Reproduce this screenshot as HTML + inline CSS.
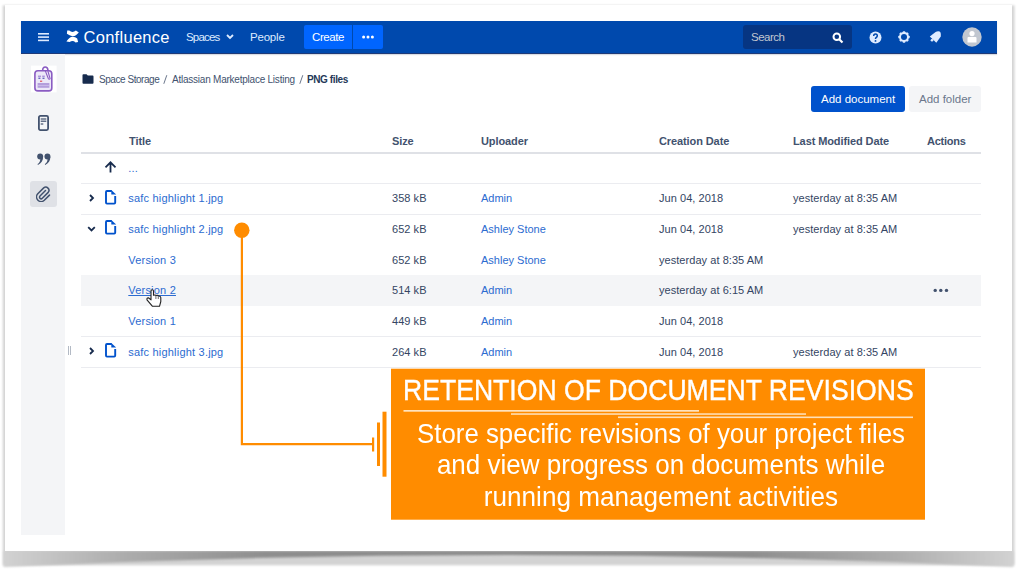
<!DOCTYPE html>
<html><head><meta charset="utf-8">
<style>
*{margin:0;padding:0;box-sizing:border-box}
html,body{width:1024px;height:575px;overflow:hidden;background:#fff;font-family:"Liberation Sans",sans-serif;}
.a{position:absolute;white-space:nowrap}
#card{position:absolute;left:5px;top:5px;width:1007px;height:546px;background:#fff}
#nav{position:absolute;left:21px;top:21px;width:976px;height:33px;background:#0049AD;border-bottom:1px solid #1F3A78;box-shadow:0 1px 1px rgba(9,30,66,0.15)}
#side{position:absolute;left:21px;top:54px;width:44px;height:481px;background:#F4F5F7}
.t{position:absolute;white-space:nowrap;line-height:1;}
.nav{color:#DEEBFF;font-size:11.5px}
.bc{color:#42526E;font-size:10px}
.th{color:#42526E;font-size:11px;font-weight:bold;letter-spacing:-0.1px}
.td{color:#344563;font-size:11px;letter-spacing:0.05px}
.lk{color:#2C6BD0;font-size:11px;letter-spacing:0px}
.hl{position:absolute;left:81px;height:1px;width:900px;background:#EBECF0}
</style></head><body>
<svg class="a" style="left:0;top:0" width="1024" height="575">
<defs>
<linearGradient id="gb" x1="0" x2="1" y1="0" y2="0"><stop offset="0" stop-color="#d2d2d2"/><stop offset="0.12" stop-color="#acacac"/><stop offset="0.26" stop-color="#8e8e8e"/><stop offset="0.5" stop-color="#8a8a8a"/><stop offset="0.74" stop-color="#8e8e8e"/><stop offset="0.88" stop-color="#acacac"/><stop offset="1" stop-color="#d2d2d2"/></linearGradient>
<filter id="bs" x="-2%" y="-2%" width="104%" height="104%"><feGaussianBlur stdDeviation="1.3"/></filter><filter id="bl" x="-5%" y="-50%" width="110%" height="200%"><feGaussianBlur stdDeviation="0.9"/></filter>
</defs>
<rect x="2.8" y="5.3" width="1011.7" height="560" fill="#000" opacity="0.17" filter="url(#bs)"/>
<path d="M3.5 551 L1013.5 551 L1013.5 567 Q761 555 508.5 555 Q256 555 3.5 567 Z" fill="url(#gb)" filter="url(#bl)"/>
</svg>
<div id="card"></div>
<div id="nav"></div>
<div id="side"></div>

<!-- nav contents -->
<svg class="a" style="left:38px;top:33px" width="11" height="9"><rect x="0" y="0" width="11" height="1.6" fill="#DEEBFF"/><rect x="0" y="3.3" width="11" height="1.6" fill="#DEEBFF"/><rect x="0" y="6.6" width="11" height="1.6" fill="#DEEBFF"/></svg>
<svg class="a" style="left:66px;top:30px" width="14" height="14" viewBox="0 0 14 14"><path d="M1.2 0.6 L3.2 0.6 Q6.5 3.4 9.9 0.5 L12.8 2.6 Q9.5 6.6 6.5 6.2 Q3.5 5.8 0.9 3.8Z" fill="#fff"/><path d="M0.4 11.4 Q3.5 7 6.5 6.8 Q9.5 6.8 11.2 8.5 L12.1 12 L9.6 12.4 Q6.5 9.8 3.7 12.1Z" fill="#fff"/></svg>
<div class="t" style="left:83.5px;top:28.8px;font-size:16.5px;color:#fff;letter-spacing:0.28px">Confluence</div>
<div class="t nav" style="left:186px;top:32px;letter-spacing:-0.8px">Spaces</div>
<svg class="a" style="left:226px;top:34px" width="8" height="6"><path d="M1 1 L4 4 L7 1" stroke="#DEEBFF" stroke-width="1.8" fill="none"/></svg>
<div class="t nav" style="left:250px;top:32px;letter-spacing:-0.2px">People</div>
<div class="a" style="left:304px;top:25px;width:48px;height:24px;background:#0065FF;border-radius:2px 0 0 2px"></div>
<div class="a" style="left:353px;top:25px;width:30px;height:24px;background:#0065FF;border-radius:0 2px 2px 0"></div>
<div class="t nav" style="left:312px;top:32px;color:#fff;letter-spacing:-0.4px">Create</div>
<svg class="a" style="left:362px;top:35px" width="12" height="4"><circle cx="1.6" cy="2" r="1.5" fill="#fff"/><circle cx="6" cy="2" r="1.5" fill="#fff"/><circle cx="10.4" cy="2" r="1.5" fill="#fff"/></svg>

<div class="a" style="left:743px;top:25px;width:109px;height:24px;background:#063582;border-radius:3px"></div>
<div class="t nav" style="left:751px;top:32px;color:#C1C7D0;letter-spacing:-0.5px">Search</div>
<svg class="a" style="left:832px;top:32px" width="12" height="12"><circle cx="4.8" cy="4.8" r="3.3" stroke="#fff" stroke-width="2" fill="none"/><path d="M7.2 7.2 L10.5 10.5" stroke="#fff" stroke-width="2.2"/></svg>
<svg class="a" style="left:868.5px;top:31px" width="13" height="13" viewBox="0 0 13 13"><circle cx="6.5" cy="6.5" r="6" fill="#DEEBFF"/><path d="M4.7 4.9 Q4.7 3 6.5 3 Q8.3 3 8.3 4.8 Q8.3 5.9 7.1 6.6 Q6.5 7 6.5 8" stroke="#0049AD" stroke-width="1.5" fill="none"/><circle cx="6.5" cy="9.9" r="0.95" fill="#0049AD"/></svg>
<svg class="a" style="left:897px;top:30px" width="14" height="14" viewBox="0 0 14 14"><g fill="#DEEBFF"><circle cx="7" cy="7" r="4.9"/><rect x="5.7" y="1.3" width="2.6" height="11.4" rx="0.6"/><rect x="5.7" y="1.3" width="2.6" height="11.4" rx="0.6" transform="rotate(45 7 7)"/><rect x="5.7" y="1.3" width="2.6" height="11.4" rx="0.6" transform="rotate(90 7 7)"/><rect x="5.7" y="1.3" width="2.6" height="11.4" rx="0.6" transform="rotate(135 7 7)"/></g><circle cx="7" cy="7" r="3" fill="#0049AD"/></svg>
<svg class="a" style="left:926px;top:28px" width="20" height="18" viewBox="0 0 20 18"><path d="M3.8 8.5 L9.6 4 Q11.5 3 13.6 3.5 Q14.8 4 14.8 6 L14.8 8.6 L10.3 14.8 Z" fill="#DEEBFF"/><circle cx="6" cy="12.3" r="1.3" fill="#DEEBFF"/></svg>
<svg class="a" style="left:962px;top:27px" width="20" height="20"><circle cx="10" cy="10" r="9.7" fill="#C1C7D0"/><circle cx="10" cy="6.6" r="2.6" fill="#fff"/><path d="M5.5 11 Q5.5 10 6.5 10 L13.5 10 Q14.5 10 14.5 11 L14.5 15.5 L5.5 15.5Z" fill="#fff"/></svg>

<!-- sidebar -->
<svg class="a" style="left:31px;top:65px" width="26" height="28" viewBox="0 0 26 28">
<rect x="0" y="0.6" width="25.6" height="26.8" fill="#fff"/>
<rect x="3.9" y="5.7" width="16.9" height="20.2" rx="3" fill="#ECE8F8" stroke="#8A5CC2" stroke-width="1.6"/>
<path d="M11.6 5.4 Q11.6 2 14.2 2 Q16.8 2 17 5.4" fill="none" stroke="#8A5CC2" stroke-width="1.5"/>
<path d="M14.3 5.9 L17.3 13.4 Q18.2 15 19.1 13.7 L16.9 6.2" fill="none" stroke="#8A5CC2" stroke-width="1.1"/>
<rect x="7" y="10.6" width="3" height="1.3" fill="#A88CD8"/><rect x="11.2" y="10.6" width="2.6" height="1.3" fill="#A88CD8"/>
<rect x="7.4" y="12.6" width="2" height="1.3" fill="#5C5CB8"/><rect x="11.5" y="12.6" width="2" height="1.3" fill="#5C5CB8"/>
<rect x="9" y="15.6" width="2.2" height="1.3" fill="#E0606A"/>
<rect x="6.6" y="18" width="11.8" height="4.8" fill="#B49EDC"/>
<rect x="6.6" y="20.2" width="11.8" height="0.6" fill="#D6CCF0"/>
</svg>
<svg class="a" style="left:38px;top:115px" width="11" height="16" viewBox="0 0 11 16"><rect x="0.9" y="0.9" width="9.2" height="14.2" rx="1.5" fill="none" stroke="#42526E" stroke-width="1.8"/><rect x="2.7" y="3.4" width="5.6" height="1.2" fill="#42526E"/><rect x="2.7" y="5.6" width="5.6" height="1.2" fill="#42526E"/><rect x="2.7" y="8.4" width="2.6" height="1.2" fill="#42526E"/></svg>
<svg class="a" style="left:36.6px;top:153px" width="14" height="12.4" viewBox="0 0 15 13" preserveAspectRatio="none"><g fill="#42526E"><circle cx="3.4" cy="3.6" r="3.2"/><path d="M6.5 4 C6.6 8 4.5 11 1 12.5 L0.6 11.5 C2.5 10.5 3.5 8.5 3.4 6.7Z"/><circle cx="11.2" cy="3.6" r="3.2"/><path d="M14.3 4 C14.4 8 12.3 11 8.8 12.5 L8.4 11.5 C10.3 10.5 11.3 8.5 11.2 6.7Z"/></g></svg>
<div class="a" style="left:30px;top:181px;width:27px;height:26px;background:#DFE1E6;border-radius:3px"></div>
<svg class="a" style="left:36px;top:186px" width="15" height="16" viewBox="0 0 15 16"><path d="M9.5 4.5 L4 10 A1.6 1.6 0 0 0 6.3 12.3 L12.2 6.4 A3.2 3.2 0 0 0 7.7 1.9 L1.8 7.8 A4.6 4.6 0 0 0 8.3 14.3 L13.5 9.1" fill="none" stroke="#42526E" stroke-width="1.5" stroke-linecap="round"/></svg>

<!-- breadcrumb -->
<svg class="a" style="left:82px;top:74px" width="12" height="10" viewBox="0 0 12 10"><path d="M0.5 1.2 Q0.5 0.3 1.4 0.3 L4.5 0.3 L5.8 1.6 L10.6 1.6 Q11.5 1.6 11.5 2.5 L11.5 8.8 Q11.5 9.7 10.6 9.7 L1.4 9.7 Q0.5 9.7 0.5 8.8Z" fill="#172B4D"/></svg>
<div class="t bc" style="left:99px;top:75px;letter-spacing:-0.45px">Space Storage</div>
<svg class="a" style="left:162px;top:74px" width="6" height="11"><path d="M1.8 9.8 L4.8 1.2" stroke="#6B778C" stroke-width="1"/></svg>
<div class="t bc" style="left:172px;top:75px;letter-spacing:-0.23px">Atlassian Marketplace Listing</div>
<svg class="a" style="left:297.5px;top:74px" width="6" height="11"><path d="M1.8 9.8 L4.8 1.2" stroke="#6B778C" stroke-width="1"/></svg>
<div class="t bc" style="left:307px;top:75px;color:#253858;font-weight:bold;letter-spacing:-0.4px">PNG files</div>

<!-- buttons -->
<div class="a" style="left:811px;top:86px;width:94px;height:26px;background:#0052CC;border-radius:3px"></div>
<div class="t" style="left:821px;top:94px;font-size:11.5px;color:#fff">Add document</div>
<div class="a" style="left:909px;top:86px;width:72px;height:26px;background:#F4F5F7;border-radius:3px"></div>
<div class="t" style="left:919px;top:94px;font-size:11.5px;color:#6B778C">Add folder</div>

<!-- table header -->
<div class="t th" style="left:129px;top:136px">Title</div>
<div class="t th" style="left:392px;top:136px">Size</div>
<div class="t th" style="left:481px;top:136px">Uploader</div>
<div class="t th" style="left:659px;top:136px">Creation Date</div>
<div class="t th" style="left:793px;top:136px">Last Modified Date</div>
<div class="t th" style="left:927px;top:136px;letter-spacing:-0.25px">Actions</div>
<div class="a" style="left:81px;top:152px;width:900px;height:2px;background:#DFE1E6"></div>

<!-- rows -->
<svg class="a" style="left:104px;top:161.3px" width="13" height="12" viewBox="0 0 13 12"><path d="M6.5 11.5 V1.5 M1.5 6.3 L6.5 1.3 L11.5 6.3" stroke="#172B4D" stroke-width="1.8" fill="none"/></svg>
<div class="t lk" style="letter-spacing:0.2px;left:128.3px;top:162.5px">...</div>
<svg class="a" style="left:88px;top:194.0px" width="7" height="8" viewBox="0 0 7 8"><path d="M2 1 L5 4 L2 7" stroke="#172B4D" stroke-width="1.8" fill="none"/></svg>
<svg class="a" style="left:104px;top:188.7px" width="13" height="16" viewBox="0 0 13 16"><path d="M7.8 2 L3 2 Q2 2 2 3 L2 13.6 Q2 14.6 3 14.6 L10.2 14.6 Q11.2 14.6 11.2 13.6 L11.2 7" stroke="#0052CC" stroke-width="1.9" fill="none"/><path d="M7.3 1.05 L12.15 5.5 L7.3 5.5 Z" fill="#0052CC"/></svg>
<div class="t lk" style="letter-spacing:0.2px;left:128.3px;top:193.2px">safc highlight 1.jpg</div>
<div class="t td" style="left:392px;top:193.2px">358 kB</div>
<div class="t lk" style="left:481px;top:193.2px">Admin</div>
<div class="t td" style="left:659px;top:193.2px">Jun 04, 2018</div>
<div class="t td" style="left:793px;top:193.2px">yesterday at 8:35 AM</div>
<svg class="a" style="left:87px;top:225.7px" width="9" height="6" viewBox="0 0 9 6"><path d="M1.2 1.2 L4.5 4.5 L7.8 1.2" stroke="#172B4D" stroke-width="1.8" fill="none"/></svg>
<svg class="a" style="left:104px;top:219.4px" width="13" height="16" viewBox="0 0 13 16"><path d="M7.8 2 L3 2 Q2 2 2 3 L2 13.6 Q2 14.6 3 14.6 L10.2 14.6 Q11.2 14.6 11.2 13.6 L11.2 7" stroke="#0052CC" stroke-width="1.9" fill="none"/><path d="M7.3 1.05 L12.15 5.5 L7.3 5.5 Z" fill="#0052CC"/></svg>
<div class="t lk" style="letter-spacing:0.2px;left:128.3px;top:223.9px">safc highlight 2.jpg</div>
<div class="t td" style="left:392px;top:223.9px">652 kB</div>
<div class="t lk" style="left:481px;top:223.9px">Ashley Stone</div>
<div class="t td" style="left:659px;top:223.9px">Jun 04, 2018</div>
<div class="t td" style="left:793px;top:223.9px">yesterday at 8:35 AM</div>
<div class="t lk" style="letter-spacing:0.2px;left:128.3px;top:254.6px">Version 3</div>
<div class="t td" style="left:392px;top:254.6px">652 kB</div>
<div class="t lk" style="left:481px;top:254.6px">Ashley Stone</div>
<div class="t td" style="left:659px;top:254.6px">yesterday at 8:35 AM</div>
<div class="a" style="left:81px;top:275px;width:900px;height:31px;background:#F4F5F7"></div>
<div class="t lk" style="letter-spacing:0.2px;left:128.3px;top:285.2px;text-decoration:underline">Version 2</div>
<div class="t td" style="left:392px;top:285.2px">514 kB</div>
<div class="t lk" style="left:481px;top:285.2px">Admin</div>
<div class="t td" style="left:659px;top:285.2px">yesterday at 6:15 AM</div>
<svg class="a" style="left:933px;top:288px" width="16" height="5"><circle cx="2.2" cy="2.4" r="1.7" fill="#42526E"/><circle cx="7.8" cy="2.4" r="1.7" fill="#42526E"/><circle cx="13.5" cy="2.4" r="1.7" fill="#42526E"/></svg>
<div class="t lk" style="letter-spacing:0.2px;left:128.3px;top:315.9px">Version 1</div>
<div class="t td" style="left:392px;top:315.9px">449 kB</div>
<div class="t lk" style="left:481px;top:315.9px">Admin</div>
<div class="t td" style="left:659px;top:315.9px">Jun 04, 2018</div>
<svg class="a" style="left:88px;top:347.4px" width="7" height="8" viewBox="0 0 7 8"><path d="M2 1 L5 4 L2 7" stroke="#172B4D" stroke-width="1.8" fill="none"/></svg>
<svg class="a" style="left:104px;top:342.1px" width="13" height="16" viewBox="0 0 13 16"><path d="M7.8 2 L3 2 Q2 2 2 3 L2 13.6 Q2 14.6 3 14.6 L10.2 14.6 Q11.2 14.6 11.2 13.6 L11.2 7" stroke="#0052CC" stroke-width="1.9" fill="none"/><path d="M7.3 1.05 L12.15 5.5 L7.3 5.5 Z" fill="#0052CC"/></svg>
<div class="t lk" style="letter-spacing:0.2px;left:128.3px;top:346.6px">safc highlight 3.jpg</div>
<div class="t td" style="left:392px;top:346.6px">264 kB</div>
<div class="t lk" style="left:481px;top:346.6px">Admin</div>
<div class="t td" style="left:659px;top:346.6px">Jun 04, 2018</div>
<div class="t td" style="left:793px;top:346.6px">yesterday at 8:35 AM</div>
<div class="hl" style="top:183px"></div>
<div class="hl" style="top:214px"></div>
<div class="hl" style="top:336px"></div>
<div class="hl" style="top:367px"></div>
<svg class="a" style="left:146px;top:289px" width="17" height="19" viewBox="0 0 17 19"><path d="M5 2 Q5 0.8 6.2 0.8 Q7.5 0.8 7.5 2 L7.5 6.3 Q9.5 5.6 10 6.5 Q12 6 12.3 7 Q14.5 6.8 14.8 8.5 L14.8 12.5 L13.5 17.3 L6.5 17.3 L1 10.8 Q0.6 9 2.3 8.8 L5 10.8 Z" fill="#fff" stroke="#222" stroke-width="1.1" stroke-linejoin="round"/><path d="M9.9 6.8 V10 M12.3 7.3 V10" stroke="#444" stroke-width="0.8"/></svg>
<div class="a" style="left:67.5px;top:346px;width:1.2px;height:9px;background:#B3BAC5"></div>
<div class="a" style="left:70px;top:346px;width:1.2px;height:9px;background:#B3BAC5"></div>
<!-- annotation -->
<svg class="a" style="left:0;top:0" width="1024" height="575">
<circle cx="241.8" cy="230.2" r="7.7" fill="#FF8C00"/>
<path d="M241.9 230 V444.2 H373" stroke="#FF8C00" stroke-width="2.2" fill="none"/>
<rect x="372" y="437.5" width="2.2" height="14" fill="#FF8C00"/>
<rect x="377" y="422.5" width="3" height="43.5" fill="#FF8C00"/>
<rect x="382.5" y="411.7" width="4" height="65" fill="#FF8C00"/>
<rect x="391" y="368.7" width="534" height="151" fill="#FF8C00"/>
<rect x="403.5" y="410" width="295.5" height="1.7" fill="#FFE3BF"/>
<rect x="511" y="413.2" width="295" height="1.7" fill="#FFD9A8"/>
<rect x="618" y="416.5" width="295" height="1.6" fill="#FFE0B8"/>
</svg>
<div class="t" style="left:402.8px;top:375.24px;font-size:30.3px;color:#fff;-webkit-text-stroke:0.4px #fff;transform:scaleX(0.8776);transform-origin:0 0">RETENTION OF DOCUMENT REVISIONS</div>
<div class="t" style="left:360.75px;top:419.89px;width:600px;text-align:center;font-size:28px;color:#fff;transform:scaleX(0.922)">Store specific revisions of your project files</div>
<div class="t" style="left:360.8px;top:451.09px;width:600px;text-align:center;font-size:28px;color:#fff;transform:scaleX(0.929)">and view progress on documents while</div>
<div class="t" style="left:360.8px;top:483.29px;width:600px;text-align:center;font-size:28px;color:#fff;transform:scaleX(0.933)">running management activities</div>
</body></html>
